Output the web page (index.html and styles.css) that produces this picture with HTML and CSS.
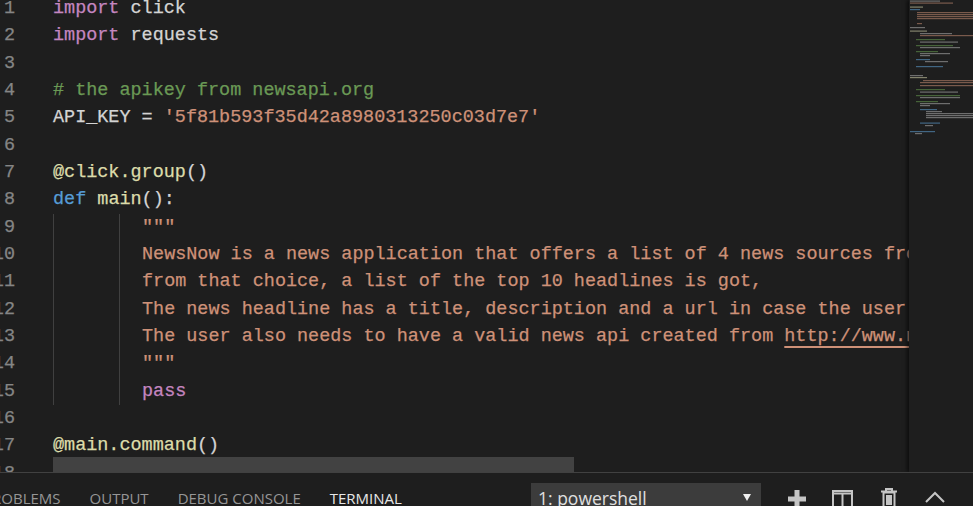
FILE: index.html
```html
<!DOCTYPE html>
<html lang="en">
<head>
<meta charset="utf-8">
<title>NewsNow - Editor</title>
<link rel="stylesheet" href="styles.css">
</head>
<body>
<div class="editor">
  <div class="code">
    <div class="line"><span class="num">1</span><span class="text"><span class="kw">import</span> click</span></div>
    <div class="line"><span class="num">2</span><span class="text"><span class="kw">import</span> requests</span></div>
    <div class="line"><span class="num">3</span><span class="text"></span></div>
    <div class="line"><span class="num">4</span><span class="text"><span class="com"># the apikey from newsapi.org</span></span></div>
    <div class="line"><span class="num">5</span><span class="text">API_KEY = <span class="str">'5f81b593f35d42a8980313250c03d7e7'</span></span></div>
    <div class="line"><span class="num">6</span><span class="text"></span></div>
    <div class="line"><span class="num">7</span><span class="text"><span class="fn">@click.group</span>()</span></div>
    <div class="line"><span class="num">8</span><span class="text"><span class="def">def</span> <span class="fn">main</span>():</span></div>
    <div class="line"><span class="num">9</span><span class="guide g1"></span><span class="guide g2"></span><span class="text str">"""</span></div>
    <div class="line"><span class="num">10</span><span class="guide g1"></span><span class="guide g2"></span><span class="text str">NewsNow is a news application that offers a list of 4 news sources from</span></div>
    <div class="line"><span class="num">11</span><span class="guide g1"></span><span class="guide g2"></span><span class="text str">from that choice, a list of the top 10 headlines is got,</span></div>
    <div class="line"><span class="num">12</span><span class="guide g1"></span><span class="guide g2"></span><span class="text str">The news headline has a title, description and a url in case the user</span></div>
    <div class="line"><span class="num">13</span><span class="guide g1"></span><span class="guide g2"></span><span class="text str">The user also needs to have a valid news api created from <span class="link">http://www.newsapi.org</span></span></div>
    <div class="line"><span class="num">14</span><span class="guide g1"></span><span class="guide g2"></span><span class="text str">"""</span></div>
    <div class="line"><span class="num">15</span><span class="guide g1"></span><span class="guide g2"></span><span class="text kw">pass</span></div>
    <div class="line"><span class="num">16</span><span class="text"></span></div>
    <div class="line"><span class="num">17</span><span class="text"><span class="fn">@main.command</span>()</span></div>
    <div class="line"><span class="num">18</span><span class="text"></span></div>
    <div class="hscroll"></div>
  </div>
  <div class="minimap">
    <svg class="mini-svg" width="64" height="472" viewBox="909 0 64 472" aria-hidden="true">
      <g class="m-white">
        <rect x="910" y="0.5" width="30" height="1.2"/>
        <rect x="910" y="27" width="15" height="1.2"/>
        <rect x="920" y="33" width="32" height="1.2"/>
        <rect x="920" y="41.5" width="38" height="1.2"/>
        <rect x="920" y="47" width="40" height="1.2"/>
        <rect x="920" y="53" width="30" height="1.2"/>
        <rect x="920" y="55" width="10" height="1.2"/>
        <rect x="925" y="61" width="23" height="1.2"/>
        <rect x="910" y="75" width="13" height="1.2"/>
        <rect x="920" y="91.5" width="38" height="1.2"/>
        <rect x="920" y="97" width="40" height="1.2"/>
        <rect x="920" y="103" width="30" height="1.2"/>
        <rect x="920" y="105" width="10" height="1.2"/>
        <rect x="926" y="111" width="16" height="1.2"/>
        <rect x="926" y="113" width="47" height="1.2"/>
        <rect x="926" y="115" width="47" height="1.2"/>
        <rect x="926" y="117" width="47" height="1.2"/>
        <rect x="925" y="125" width="8" height="1.2"/>
        <rect x="915" y="133" width="7" height="1.2"/>
      </g>
      <g class="m-str">
        <rect x="910" y="2.5" width="43" height="1.2"/>
        <rect x="917" y="12" width="56" height="1.2"/>
        <rect x="917" y="14" width="56" height="1.2"/>
        <rect x="917" y="16" width="56" height="1.2"/>
        <rect x="917" y="18" width="56" height="1.2"/>
        <rect x="917" y="23" width="5" height="1.2"/>
        <rect x="920" y="35" width="53" height="1.2"/>
        <rect x="923" y="80" width="50" height="1.2"/>
        <rect x="920" y="82" width="53" height="1.2"/>
        <rect x="920" y="85" width="53" height="1.2"/>
      </g>
      <g class="m-fn">
        <rect x="910" y="6.5" width="13" height="1.2"/>
        <rect x="910" y="30.5" width="17" height="1.2"/>
        <rect x="910" y="77" width="17" height="1.2"/>
      </g>
      <g class="m-blue">
        <rect x="910" y="9" width="10" height="1.2"/>
        <rect x="916" y="59" width="14" height="1.2"/>
        <rect x="916" y="66" width="27" height="1.2"/>
        <rect x="920" y="109" width="17" height="1.2"/>
        <rect x="920" y="122.5" width="20" height="1.2"/>
        <rect x="910" y="131" width="25" height="1.2"/>
      </g>
      <g class="m-com">
        <rect x="916" y="39" width="29" height="1.2"/>
        <rect x="916" y="45" width="37" height="1.2"/>
        <rect x="916" y="51" width="22" height="1.2"/>
        <rect x="916" y="89" width="29" height="1.2"/>
        <rect x="916" y="95" width="44" height="1.2"/>
        <rect x="916" y="101" width="22" height="1.2"/>
      </g>
    </svg>
  </div>
</div>
<div class="panel">
  <div class="tabs">
    <span class="tab">PROBLEMS</span>
    <span class="tab">OUTPUT</span>
    <span class="tab">DEBUG CONSOLE</span>
    <span class="tab active">TERMINAL</span>
  </div>
  <div class="actions">
    <div class="select"><span>1: powershell</span><span class="caret"></span></div>
    <svg class="icon ic-plus" width="18" height="18" viewBox="0 0 18 18" aria-hidden="true"><path class="solid" d="M6.500 0h5v6.500H18v5h-6.500V18h-5v-6.500H0v-5h6.500z"/></svg>
    <svg class="icon ic-split" width="21" height="20" viewBox="0 0 21 20" aria-hidden="true"><path class="line-icon" d="M1 1h19v18H1zM1 3.500h19M10.500 3.500V19"/></svg>
    <svg class="icon ic-trash" width="16" height="20" viewBox="0 0 16 20" aria-hidden="true"><path class="line-icon" d="M2.500 4.500h11V19h-11zM0 3.500h16M5 3V1h6v2M6 7v10M8 7v10M10 7v10"/></svg>
    <svg class="icon ic-chev" width="20" height="12" viewBox="0 0 20 12" aria-hidden="true"><path class="chev" d="M1 11l9-9 9 9"/></svg>
  </div>
</div>
</body>
</html>
```
FILE: styles.css
```css
* { box-sizing: border-box; }
html, body { margin: 0; height: 506px; overflow: hidden; background: #1e1e1e; }
body { display: flex; flex-direction: column; width: 973px; }

.editor { display: flex; height: 472px; flex: none; overflow: hidden; }
.code {
  position: relative;
  flex: 1;
  min-width: 0;
  overflow: hidden;
  font-family: "Liberation Mono", "DejaVu Sans Mono", monospace;
  font-size: 18.47px;
  color: #d4d4d4;
  -webkit-text-stroke: 0.25px currentColor;
}
.line { display: flex; height: 27.33px; line-height: 27.33px; white-space: pre; }
.line:first-child { margin-top: -5px; }
.num { flex: none; width: 15px; margin-right: 38px; display: flex; justify-content: flex-end; color: #858585; }
.guide { flex: none; border-left: 1px solid #404040; }
.g1 { width: 66px; }
.g2 { width: 23px; }
.kw { color: #c586c0; }
.com { color: #6a9955; }
.str { color: #ce9178; }
.fn { color: #dcdcaa; }
.def { color: #569cd6; }
.link { text-decoration: underline; text-decoration-thickness: 2px; text-underline-offset: 5px; text-decoration-skip-ink: none; }
.hscroll { position: absolute; left: 53px; top: 457px; width: 521px; height: 15px; background: #424242; }

.minimap { flex: none; width: 64px; background: #1e1e1e; box-shadow: -2px 0 4px rgba(0, 0, 0, 0.6); position: relative; }
.mini-svg { display: block; filter: blur(0.45px); }
.m-white { fill: #6e6e6e; }
.m-str { fill: #7a5a4c; }
.m-fn { fill: #82826c; }
.m-blue { fill: #416683; }
.m-com { fill: #466339; }

.panel {
  flex: none;
  height: 34px;
  border-top: 1px solid #414141;
  display: flex;
  justify-content: space-between;
  overflow: hidden;
  font-family: "Open Sans", "Noto Sans", sans-serif;
  background: #1e1e1e;
}
.tabs { display: flex; gap: 29px; margin-left: -17px; padding-top: 15px; font-size: 15px; line-height: 20px; color: #969696; }
.tab.active { color: #e7e7e7; }
.actions { display: flex; align-items: flex-start; padding-top: 10px; padding-right: 28px; }
.select {
  width: 230px;
  height: 34px;
  margin-right: 27px;
  padding: 3px 10px 0 7px;
  background: #3c3c3c;
  color: #e0e0e0;
  font-size: 17.5px;
  line-height: 24px;
  display: flex;
  justify-content: space-between;
}
.caret { width: 0; height: 0; margin-top: 8px; border-left: 4.5px solid transparent; border-right: 4.5px solid transparent; border-top: 7px solid #f0f0f0; }
.icon { flex: none; margin-top: 7px; }
.ic-plus { margin-right: 26px; }
.ic-split { margin-right: 28px; }
.ic-trash { margin-right: 28px; margin-top: 5px; }
.ic-chev { margin-top: 8px; }
.solid { fill: #c5c5c5; }
.line-icon { fill: none; stroke: #c5c5c5; stroke-width: 2; }
.chev { fill: none; stroke: #c5c5c5; stroke-width: 2; }
```
